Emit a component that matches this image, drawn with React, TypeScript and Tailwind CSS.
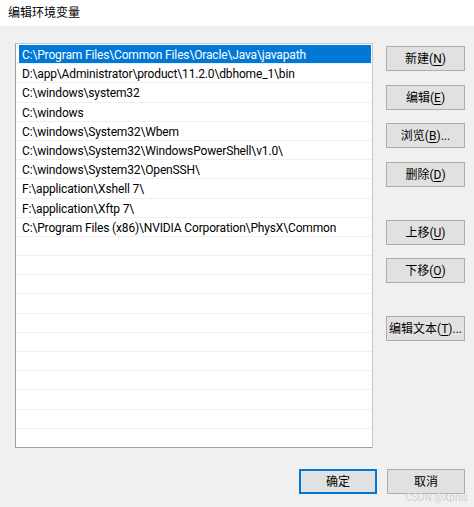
import React from "react";

const paths = [
  "C:\\Program Files\\Common Files\\Oracle\\Java\\javapath",
  "D:\\app\\Administrator\\product\\11.2.0\\dbhome_1\\bin",
  "C:\\windows\\system32",
  "C:\\windows",
  "C:\\windows\\System32\\Wbem",
  "C:\\windows\\System32\\WindowsPowerShell\\v1.0\\",
  "C:\\windows\\System32\\OpenSSH\\",
  "F:\\application\\Xshell 7\\",
  "F:\\application\\Xftp 7\\",
  "C:\\Program Files (x86)\\NVIDIA Corporation\\PhysX\\Common",
];

const font = { fontFamily: 'Roboto, "Noto Sans CJK SC", sans-serif' };

function Btn({ label, mn, tail, className = "" }: { label: string; mn?: string; tail?: string; className?: string }) {
  return (
    <button
      className={`flex h-[25px] w-[79px] items-center justify-center border border-[#adadad] bg-[#e1e1e1] text-[12px] leading-none text-black ${className}`}
    >
      {label}
      {mn && (
        <>
          (<span className="underline underline-offset-2">{mn}</span>)
        </>
      )}
      {tail}
    </button>
  );
}

export default function App() {
  const rows = Array.from({ length: 21 }, (_, i) => paths[i] ?? "");
  return (
    <div className="relative flex h-[507px] w-[474px] flex-col bg-white text-black" style={font}>
      <div className="flex h-[26px] items-center bg-white pl-[8px] text-[12px]">编辑环境变量</div>

      <div className="flex flex-1 flex-col bg-[#f0f0f0] pl-[15px]">
        <div className="mt-[17px] flex">
          <div className="h-[405px] w-[358px] overflow-hidden border border-[#a0a0a0] border-t-[#c8c8c8] border-r-[#c8c8c8] bg-white pt-[1px]">
            {rows.map((p, i) => (
              <div key={i} className="h-[19.2px] border-b border-[#efefef] pl-[3px] pr-[1px]">
                <div
                  className={`flex h-full items-center pl-[3px] pt-[2px] text-[12px] tracking-[-0.15px] whitespace-nowrap ${
                    i === 0 ? "bg-[#0078d7] text-white" : ""
                  }`}
                >
                  {p}
                </div>
              </div>
            ))}
          </div>

          <div className="ml-[13px] flex flex-col pt-[3px]">
            <Btn label="新建" mn="N" />
            <Btn label="编辑" mn="E" className="mt-[14px]" />
            <Btn label="浏览" mn="B" tail="..." className="mt-[13px]" />
            <Btn label="删除" mn="D" className="mt-[14px]" />
            <Btn label="上移" mn="U" className="mt-[33px]" />
            <Btn label="下移" mn="O" className="mt-[13px]" />
            <Btn label="编辑文本" mn="T" tail="..." className="mt-[33px]" />
          </div>
        </div>

        <div className="mt-[21px] flex justify-end gap-[10px] pr-[9px]">
          <button className="flex h-[25px] w-[78px] items-center justify-center border-2 border-[#0078d7] bg-[#e1e1e1] text-[12px] leading-none">
            确定
          </button>
          <button className="flex h-[25px] w-[78px] items-center justify-center border border-[#adadad] bg-[#e1e1e1] text-[12px] leading-none">
            取消
          </button>
        </div>
      </div>

      <span className="absolute bottom-[4px] right-[6px] text-[10px] leading-none text-[#d0d0d0]">CSDN @Xpnis</span>
    </div>
  );
}
